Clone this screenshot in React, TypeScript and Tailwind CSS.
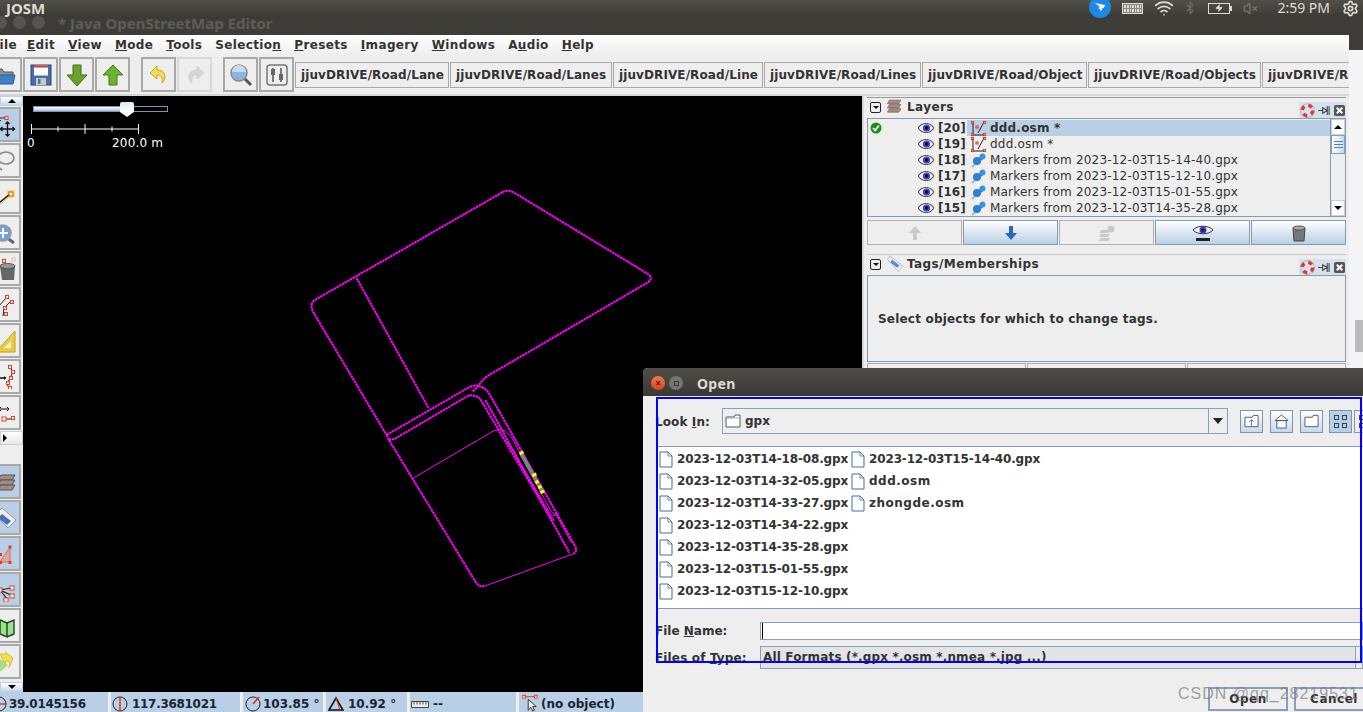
import { Bluetooth, Settings, VolumeX, Wifi, Zap } from 'lucide-react'
import type { ReactNode } from 'react'

// before / underlined mnemonic / after
const MENUS = [
  ['', 'F', 'ile'],
  ['', 'E', 'dit'],
  ['', 'V', 'iew'],
  ['', 'M', 'ode'],
  ['', 'T', 'ools'],
  ['Selectio', 'n', ''],
  ['', 'P', 'resets'],
  ['', 'I', 'magery'],
  ['', 'W', 'indows'],
  ['A', 'u', 'dio'],
  ['', 'H', 'elp'],
]

const PRESETS = [
  { label: 'jjuvDRIVE/Road/Lane', w: 'w-[154px]' },
  { label: 'jjuvDRIVE/Road/Lanes', w: 'w-[162px]' },
  { label: 'jjuvDRIVE/Road/Line', w: 'w-[150px]' },
  { label: 'jjuvDRIVE/Road/Lines', w: 'w-[157px]' },
  { label: 'jjuvDRIVE/Road/Object', w: 'w-[165px]' },
  { label: 'jjuvDRIVE/Road/Objects', w: 'w-[173px]' },
  { label: 'jjuvDRIVE/Road', w: 'w-[120px]' },
]

const LAYERS = [
  { n: 20, name: 'ddd.osm *', kind: 'data', active: true },
  { n: 19, name: 'ddd.osm *', kind: 'data' },
  { n: 18, name: 'Markers from 2023-12-03T15-14-40.gpx', kind: 'marker' },
  { n: 17, name: 'Markers from 2023-12-03T15-12-10.gpx', kind: 'marker' },
  { n: 16, name: 'Markers from 2023-12-03T15-01-55.gpx', kind: 'marker' },
  { n: 15, name: 'Markers from 2023-12-03T14-35-28.gpx', kind: 'marker' },
]

const FILES_A = [
  '2023-12-03T14-18-08.gpx',
  '2023-12-03T14-32-05.gpx',
  '2023-12-03T14-33-27.gpx',
  '2023-12-03T14-34-22.gpx',
  '2023-12-03T14-35-28.gpx',
  '2023-12-03T15-01-55.gpx',
  '2023-12-03T15-12-10.gpx',
]
const FILES_B = ['2023-12-03T15-14-40.gpx', 'ddd.osm', 'zhongde.osm']

function Icon({ children, size = 24 }: { children: ReactNode; size?: number }) {
  return (
    <svg viewBox="0 0 24 24" width={size} height={size} className="shrink-0">
      {children}
    </svg>
  )
}

function N({ x, y, s = 3 }: { x: number; y: number; s?: number }) {
  return <rect x={x - s / 2} y={y - s / 2} width={s} height={s} fill="#fff" stroke="#e0401a" strokeWidth="1" />
}

const ToolBtn = ({ children, off, active }: { children: ReactNode; off?: boolean; active?: boolean }) => (
  <div
    className={`flex h-[35px] w-[35px] shrink-0 items-center justify-center border-2 ${
      off ? 'border-[#d8d8d8]' : 'border-[#a9a9a9]'
    } ${active ? 'border-[#7f93ab] bg-[#b8cfe5]' : 'bg-[#eeeeee]'}`}
  >
    {children}
  </div>
)

const toolbarIcons = {
  open: (
    <Icon>
      <path d="M2 6h7l2 3h9v11H2z" fill="#8a8f94" stroke="#555" />
      <path d="M2 12h20l-2 9H2z" fill="#3f7fc4" stroke="#2a5a96" />
    </Icon>
  ),
  save: (
    <Icon>
      <rect x="2" y="2" width="20" height="20" fill="#4c6ea8" stroke="#2d4370" />
      <rect x="5" y="2.5" width="14" height="10" fill="#fff" />
      <rect x="5" y="2.5" width="14" height="2" fill="#d8362a" />
      <rect x="7" y="15" width="10" height="7" fill="#c9c9c9" />
      <rect x="9" y="16" width="2.5" height="5" fill="#4c6ea8" />
    </Icon>
  ),
  down: (
    <Icon>
      <path d="M8 2h8v10h6L12 23 2 12h6z" fill="#69a32e" stroke="#3f6d14" />
    </Icon>
  ),
  up: (
    <Icon>
      <path d="M8 22h8V12h6L12 2 2 12h6z" fill="#69b32e" stroke="#3f7d14" />
    </Icon>
  ),
  undo: (
    <Icon>
      <path d="M10 3 3 10l7 6v-4c4 0 6 2 5 8 5-5 4-13-5-13z" fill="#f3dc58" stroke="#c9a81e" />
    </Icon>
  ),
  redo: (
    <Icon>
      <path d="M14 3l7 7-7 6v-4c-4 0-6 2-5 8-5-5-4-13 5-13z" fill="#d6d6d6" stroke="#cfcfcf" />
    </Icon>
  ),
  zoom: (
    <Icon>
      <path d="m15 15 7 7" stroke="#555" strokeWidth="3" />
      <circle cx="10" cy="10" r="8" fill="#8db4e4" stroke="#8a8a8a" strokeWidth="1.5" />
      <path d="M3 9a7 7 0 0 1 14 0z" fill="#c9daf0" />
    </Icon>
  ),
  prefs: (
    <Icon>
      <rect x="2" y="2" width="20" height="20" rx="3" fill="#eee" stroke="#777" strokeWidth="1.5" />
      <path d="M8 5v14M16 5v14" stroke="#777" strokeWidth="2" />
      <rect x="6" y="6" width="4" height="6" fill="#666" />
      <rect x="14" y="11" width="4" height="6" fill="#666" />
    </Icon>
  ),
}

const leftIcons = [
  <Icon key="select">
    <N x={14.5} y={5} s={3} />
    <path d="M8 5h5M9 7 6 10" stroke="#222" />
    <path d="M15.5 9v14M8.5 16h14M13.5 11l2-2 2 2M13.5 21l2 2 2-2M10.5 14l-2 2 2 2M20.5 14l2 2-2 2" stroke="#111" strokeWidth="1.3" fill="none" />
  </Icon>,
  <Icon key="lasso">
    <ellipse cx="14" cy="9" rx="8" ry="6" fill="none" stroke="#888" strokeWidth="1.6" />
    <path d="M8 14c-3 1-1 5 2 7" fill="none" stroke="#888" strokeWidth="1.6" />
  </Icon>,
  <Icon key="draw">
    <rect x="15" y="5" width="8" height="8" fill="#f2e95c" />
    <path d="M2 22 18 9" stroke="#111" strokeWidth="1.5" />
    <path d="M6 21 19 10" stroke="#d8c82a" strokeWidth="1" />
    <N x={19} y={9} s={4} />
  </Icon>,
  <Icon key="zoom">
    <path d="m14 16 8 6" stroke="#666" strokeWidth="3" />
    <circle cx="11" cy="12" r="8" fill="#6f9fdc" stroke="#999" strokeWidth="1.5" />
    <path d="M11 7v10M6 12h10" stroke="#fff" strokeWidth="2" />
  </Icon>,
  <Icon key="delete">
    <N x={12} y={4} s={3} />
    <rect x="20" y="1" width="3" height="3" fill="#fff" stroke="#f0b0a0" />
    <path d="M8 9h15l-1 14H10z" fill="#666" />
    <ellipse cx="15.5" cy="9" rx="7.5" ry="2.5" fill="#999" stroke="#555" />
  </Icon>,
  <Icon key="merge">
    <path d="M6 14 15 4M18 9l-6 6-1 8" fill="none" stroke="#222" strokeWidth="1" />
    <N x={15} y={4} />
    <N x={20} y={9} />
    <N x={13} y={15} />
    <N x={14} y={21} />
  </Icon>,
  <Icon key="ruler">
    <path d="M23 2v21H4z" fill="#e8cf3a" stroke="#c0a020" />
    <path d="M19 12v7h-7z" fill="#eee" />
  </Icon>,
  <Icon key="split">
    <path d="M7 13h7" stroke="#111" strokeWidth="1.5" />
    <path d="m12 11 2 2-2 2" fill="#111" />
    <path d="m18 2 3 5-3 6-3 6 2 4" fill="none" stroke="#222" />
    <N x={18} y={2} />
    <N x={21} y={7} />
    <N x={19} y={13} />
    <N x={16} y={18} />
    <N x={18} y={23} />
  </Icon>,
  <Icon key="improve">
    <path d="M7 8h10M15 6l2 2-2 2M9 6 7 8l2 2" fill="none" stroke="#111" />
    <path d="M13 18h9" stroke="#222" />
    <N x={12} y={18} s={4} />
    <N x={21} y={17} />
  </Icon>,
]

const lowerIcons = [
  <Icon key="layers">
    <path d="M9 5h14l-3 5H6z" fill="#a58a88" stroke="#555" />
    <path d="M9 10h14l-3 5H6z" fill="#a58a88" stroke="#555" />
    <path d="M9 15h14l-3 5H6z" fill="#a58a88" stroke="#555" />
  </Icon>,
  <Icon key="tags">
    <path d="M10 2 24 14l-8 8L3 9z" fill="#eee" stroke="#999" />
    <path d="m10 8 9 7-4 4-9-7z" fill="#4473b4" />
  </Icon>,
  <Icon key="selection">
    <path d="M8 20 18 5v15z" fill="#e2a79a" stroke="#c97060" />
    <rect x="16.5" y="3.5" width="3" height="3" fill="#e0401a" />
    <rect x="7" y="11" width="3" height="3" fill="#e0401a" />
    <rect x="7" y="19" width="3" height="3" fill="#e0401a" />
    <rect x="16.5" y="19" width="3" height="3" fill="#e0401a" />
  </Icon>,
  <Icon key="relations">
    <path d="M8 12 19 10M8 12l11 5M8 12l8 10" stroke="#222" strokeWidth="1.2" />
    <N x={8} y={12} s={4} />
    <N x={20} y={10} s={4} />
    <N x={20} y={18} s={4} />
    <N x={14} y={22} s={4} />
  </Icon>,
  <Icon key="map">
    <path d="M8 6l7 3 7-3v14l-7 3-7-3z" fill="#90e880" stroke="#333" strokeWidth="1.4" />
    <path d="M15 9v14" stroke="#333" strokeWidth="1.4" />
  </Icon>,
  <Icon key="conflict">
    <path d="M8 4h6l-1-2 8 6-3 8-2 2c3-3 2-7-2-7l-1 3z" fill="#f3dc58" stroke="#dcc030" />
    <path d="m8 9 8 6-8 7-8-7z" fill="#a8dc80" />
  </Icon>,
]

function Eye() {
  return (
    <svg viewBox="0 0 16 10" width="16" height="10" className="shrink-0">
      <path d="M0 5c4-6 12-6 16 0-4 6-12 6-16 0z" fill="#eee" stroke="#555" strokeWidth="1.2" />
      <circle cx="8.5" cy="5" r="3.6" fill="#3d3dd0" />
      <circle cx="8.5" cy="5" r="1.7" fill="#111" />
    </svg>
  )
}

function LayerIcon({ kind }: { kind: string }) {
  if (kind === 'data')
    return (
      <svg viewBox="0 0 15 15" width="15" height="15" className="shrink-0">
        <path d="M2 1v13h12M13 1 7 12" fill="none" stroke="#222" strokeWidth="1" />
        <rect x="0.5" y="0.5" width="2" height="2" fill="#fff" stroke="#e0301a" />
        <rect x="12.5" y="0.5" width="2" height="2" fill="#fff" stroke="#e0301a" />
        <rect x="0.5" y="12.5" width="2" height="2" fill="#fff" stroke="#e0301a" />
        <rect x="12.5" y="12.5" width="2" height="2" fill="#fff" stroke="#e0301a" />
        <rect x="5" y="5" width="2" height="2" fill="#fff" stroke="#e0301a" />
      </svg>
    )
  return (
    <svg viewBox="0 0 15 15" width="15" height="15" className="shrink-0">
      <path d="M1 14 6 9" stroke="#9aa4b0" strokeWidth="1.4" />
      <circle cx="6" cy="8" r="4" fill="#2b7fd6" />
      <path d="M6 6 10 3l2 3-4 4z" fill="#2b7fd6" />
      <circle cx="11.500" cy="3.500" r="3" fill="#3a92e0" />
    </svg>
  )
}

function PanelHeader({ title, icon }: { title: string; icon: ReactNode }) {
  return (
    <div className="flex h-[20px] items-center pl-[3px] font-bold text-[#333333]">
      <div className="mb-[2px] flex h-[11px] w-[11px] items-center justify-center rounded-[2px] border border-[#222222]">
        <div className="h-0 w-0 border-x-[3px] border-t-[3px] border-x-transparent border-t-[#111111]" />
      </div>
      <div className="mb-[3px] ml-[3px] flex w-[21px] justify-center">{icon}</div>
      <span className="mb-[3px] ml-[2px] flex-1 tracking-[0.4px]">{title}</span>
      <div className="flex h-[16px] items-center gap-[3px] self-end bg-[#d6e1ee] pl-[1px] pr-[1px]">
        <svg viewBox="0 0 14 14" width="15" height="15">
          <circle cx="7" cy="7" r="5" fill="none" stroke="#e8352a" strokeWidth="3.4" strokeDasharray="4 3.9" />
          <circle cx="7" cy="7" r="6.4" fill="none" stroke="#999" strokeWidth="0.5" />
        </svg>
        <svg viewBox="0 0 14 12" width="13" height="11">
          <path d="M0 6h5M5 3l5 3-5 3zM10 1v10M12 1v10" fill="none" stroke="#444" strokeWidth="1.2" />
        </svg>
        <svg viewBox="0 0 12 12" width="11" height="11">
          <rect width="12" height="12" rx="2" fill="#555" />
          <path d="m3 3 6 6M9 3 3 9" stroke="#fff" strokeWidth="2.2" />
        </svg>
      </div>
    </div>
  )
}

const layerButtons = [
  { on: false, icon: <path d="M8 1 2 8h4v7h4V8h4z" fill="#c9c9c9" /> },
  { on: true, icon: <path d="M6 1h4v7h4l-6 7-6-7h4z" fill="#2f66b4" /> },
  {
    on: false,
    icon: (
      <g fill="#c9c9c9">
        <path d="M2 5h9l-2 3H0zM2 9h9l-2 3H0zM2 13h9l-2 3H0z" />
        <circle cx="12" cy="4" r="3.5" />
      </g>
    ),
  },
  {
    on: true,
    icon: (
      <g>
        <path d="M-2 5C2 0 14 0 18 5 14 10 2 10-2 5z" fill="#eee" stroke="#333" />
        <circle cx="8" cy="5" r="3.5" fill="#3d3dd0" />
        <circle cx="8" cy="5" r="1.6" fill="#111" />
        <rect x="1" y="13" width="14" height="3" fill="#222" />
      </g>
    ),
  },
  {
    on: true,
    icon: (
      <g>
        <path d="M2 3h12l-1 13H3z" fill="#777" stroke="#444" />
        <ellipse cx="8" cy="3" rx="6" ry="2" fill="#aaa" stroke="#555" />
      </g>
    ),
  },
]

function MapDrawing() {
  return (
    <svg viewBox="23 96 840 596" className="absolute inset-0 h-full w-full">
      <g fill="none" stroke="#ff00ff" strokeWidth="2" strokeDasharray="2.6 0.5" strokeLinejoin="round">
        <path d="M503 192Q508 189 514 192L649 274Q654 278 649 282L488 376Q484 379 481 383L473 392" />
        <path d="M503 192 315 300Q310 304 313 311L387 435" />
        <path d="M357 278 429 408" />
        <path d="M387 435 470 387Q476 384 482 387" />
        <path d="M482 387Q487 389 490 394L575 545Q579 551 574 554" />
        <path d="M389 440 395 439 470 395 476 396Q480 397 482 401L553 521" />
        <path d="M387 435 390 441 476 582Q480 588 486 586" />
        <path d="M486 400 570 553" />
      </g>
      <g fill="none" stroke="#ff00ff" strokeWidth="1">
        <path d="M486 586 574 554" />
        <path d="M414 478 494 431Q500 428 506 431M506 431 512 437 552 512 558 517 572 543" />
        <path d="M508 441 555 521M553 516 560 513" />
      </g>
      <path d="M522 454 543 492" stroke="#808080" strokeWidth="4" />
      <g stroke="#ffff00" strokeWidth="3">
        <path d="M520 454 524 452" />
        <path d="M533 476 537 474" />
        <path d="M536 483 539 481" />
        <path d="M539 488 542 486" />
        <path d="M541 493 545 491" />
      </g>
    </svg>
  )
}

function FileRow({ name }: { name: string }) {
  return (
    <div className="flex h-[22px] items-center">
      <svg viewBox="0 0 14 17" width="14" height="17" className="shrink-0">
        <path d="M1 1h8l4 4v11H1z" fill="#fff" stroke="#3f6ea8" strokeWidth="1" />
        <path d="M9 1v4h4" fill="none" stroke="#3f6ea8" strokeWidth="0.8" />
      </svg>
      <span className={`ml-[4px] ${name.startsWith('2023') ? 'tracking-[-0.15px]' : 'tracking-[0.5px]'}`}>{name}</span>
    </div>
  )
}

function DialogBtn({ children }: { children: ReactNode }) {
  return (
    <div className="flex h-[23px] w-[23px] shrink-0 items-center justify-center border border-[#7f93ab] bg-gradient-to-b from-white to-[#c8d8e9]">
      {children}
    </div>
  )
}

export default function App() {
  return (
    <div className="relative flex h-[712px] w-[1363px] flex-col overflow-hidden bg-[#eeeeee] font-['DejaVu_Sans',sans-serif] text-[12px] text-[#333333]">
      {/* ubuntu panel */}
      <div className="flex h-[18px] shrink-0 items-center bg-gradient-to-b from-[#504f49] to-[#3b3a36] pb-[2px] pl-[6px] text-[#dfdbd2]">
        <span className="font-['Noto_Sans',sans-serif] text-[15px] font-bold leading-none">JOSM</span>
        <div className="ml-auto flex items-center pr-[4px]">
          <div className="mb-[3px] mr-[11px] flex h-[22px] w-[22px] items-center justify-center overflow-hidden rounded-full bg-[#1e88e5]">
            <svg viewBox="0 0 16 16" width="14" height="14">
              <path d="M2 3 14 6l-2 3-2 0 1 1-3 4 1-3-3-2 2-1z" fill="#fff" />
            </svg>
          </div>
          <div className="mr-[11px] grid h-[11px] w-[21px] grid-cols-7 gap-[1px] border border-[#dfdbd2] bg-[#888888] p-[1px]">
            {Array.from({ length: 14 }).map((_, i) => (
              <div key={i} className="bg-[#dfdbd2]" />
            ))}
          </div>
          <Wifi size={20} strokeWidth={2} className="mr-[9px] text-[#dfdbd2]" />
          <Bluetooth size={14} className="mr-[11px] text-[#6e6d67]" />
          <div className="mr-[11px] flex items-center">
            <div className="flex h-[11px] w-[22px] items-center justify-center border border-[#dfdbd2]">
              <Zap size={8} fill="#dfdbd2" className="text-[#dfdbd2]" />
            </div>
            <div className="h-[5px] w-[2px] bg-[#dfdbd2]" />
          </div>
          <VolumeX size={15} className="mr-[19px] text-[#77766f]" />
          <span className="mr-[12px] font-['Noto_Sans',sans-serif] text-[14px] font-normal leading-none">2:59 PM</span>
          <Settings size={17} strokeWidth={2.4} />
        </div>
      </div>

      {/* window title */}
      <div className="flex h-[17px] shrink-0 items-center bg-[#3e3c37] pb-[7px] pl-[58px] pr-[14px]">
        <div className="absolute left-[-6px] top-[16px] flex gap-[6px]">
          {[0, 1, 2].map((i) => (
            <div key={i} className="h-[13px] w-[13px] rounded-full bg-[#56544e]" />
          ))}
        </div>
        <span className="font-['Noto_Sans',sans-serif] text-[15px] font-bold leading-none text-[#5f5d57]">* Java OpenStreetMap Editor</span>
      </div>

      <div className="flex min-h-0 flex-1">
        <div className="flex w-[1349px] shrink-0 flex-col overflow-hidden">
          {/* menu bar */}
          <div className="flex h-[20px] shrink-0 items-center gap-[13px] bg-gradient-to-b from-white to-[#eeeeee] font-bold tracking-[0.35px]">
            {MENUS.map(([pre, u, post], i) => (
              <span key={u + post} className={i === 0 ? '-ml-[9px] mr-[-3px]' : ''}>
                {pre}
                <span className="underline">{u}</span>
                {post}
              </span>
            ))}
          </div>

          {/* tool bar */}
          <div className="flex h-[41px] shrink-0 items-start border-b-2 border-[#d6d6d6] bg-[#eeeeee] pt-[2px]">
            <div className="-ml-[13px] flex gap-px">
              <ToolBtn>{toolbarIcons.open}</ToolBtn>
              <ToolBtn>{toolbarIcons.save}</ToolBtn>
              <ToolBtn>{toolbarIcons.down}</ToolBtn>
              <ToolBtn>{toolbarIcons.up}</ToolBtn>
            </div>
            <div className="ml-[11px] flex gap-px">
              <ToolBtn>{toolbarIcons.undo}</ToolBtn>
              <ToolBtn off>{toolbarIcons.redo}</ToolBtn>
            </div>
            <div className="ml-[11px] flex gap-px">
              <ToolBtn>{toolbarIcons.zoom}</ToolBtn>
              <ToolBtn>{toolbarIcons.prefs}</ToolBtn>
            </div>
            <div className="ml-px mt-[5px] flex gap-px font-bold">
              {PRESETS.map((p) => (
                <div
                  key={p.label}
                  className={`flex h-[26px] shrink-0 items-center whitespace-nowrap border border-[#a9a9a9] pl-[5px] tracking-[0.1px] ${p.w}`}
                >
                  {p.label}
                </div>
              ))}
            </div>
          </div>

          {/* main area */}
          <div className="flex min-h-0 flex-1">
            <div className="flex w-[23px] shrink-0 flex-col overflow-hidden bg-[#eeeeee]">
              <div className="flex h-[10px] shrink-0 items-center justify-center border border-[#c3d0df] bg-gradient-to-b from-white to-[#c8d8e9]">
                <div className="h-0 w-0 border-x-[4px] border-b-[4px] border-x-transparent border-b-black" />
              </div>
              <div className="mt-px flex w-[21px] flex-col items-end gap-px">
                {leftIcons.map((icon, i) => (
                  <div key={i} className="-ml-[14px]">
                    <ToolBtn active={i === 0}>{icon}</ToolBtn>
                  </div>
                ))}
              </div>
              <div className="mt-px flex h-[14px] shrink-0 items-center border border-[#d0d0d0] bg-gradient-to-b from-white to-[#e8e8e8] pl-[2px]">
                <div className="h-0 w-0 border-y-[4px] border-l-[4px] border-y-transparent border-l-black" />
              </div>
              <div className="mt-[19px] flex w-[21px] flex-col items-end gap-px">
                {lowerIcons.map((icon, i) => (
                  <div key={i} className="-ml-[14px]">
                    <ToolBtn active={i < 4}>{icon}</ToolBtn>
                  </div>
                ))}
              </div>
              <div className="mt-auto flex h-[10px] shrink-0 items-center justify-center border border-[#c3d0df] bg-gradient-to-b from-white to-[#c8d8e9]">
                <div className="h-0 w-0 border-x-[4px] border-t-[4px] border-x-transparent border-t-black" />
              </div>
            </div>

            {/* map */}
            <div className="relative min-w-0 flex-1 bg-black">
              <MapDrawing />
              <div className="absolute left-[10px] top-[10px] flex h-[6px] w-[135px] border border-[#7f93ab] bg-black">
                <div className="w-[88px] bg-gradient-to-b from-white to-[#a9c2e0]" />
              </div>
              <div className="absolute left-[97px] top-[6px] h-[10px] w-[14px] rounded-t-[2px] bg-gradient-to-b from-[#dfe8f2] to-white" />
              <div className="absolute left-[97px] top-[16px] h-0 w-0 border-x-[7px] border-t-[5px] border-x-transparent border-t-white" />
              <svg viewBox="0 0 110 12" width="110" height="12" className="absolute left-[8px] top-[27px]">
                <path d="M.5 1v10M27 3.5v5M54 1v10M81 3.5v5M107.5 1v10M0 6h108" stroke="#fff" fill="none" />
              </svg>
              <span className="absolute left-[4px] top-[38px] text-white">0</span>
              <span className="absolute left-[89px] top-[38px] whitespace-nowrap tracking-[0.2px] text-white">200.0 m</span>
            </div>

            {/* dialogs on the right */}
            <div className="flex w-[487px] shrink-0 flex-col border-l-2 border-[#d8d8d8] bg-[#eeeeee] px-[3px]">
              <div className="mt-px border-t border-[#9a9a9a]">
                <PanelHeader
                  title="Layers"
                  icon={
                    <svg viewBox="0 0 24 24" width="17" height="17">
                      <path d="M5 3h16l-3 5H2zM5 9h16l-3 5H2zM5 15h16l-3 5H2z" fill="#a58a88" stroke="#77605e" />
                    </svg>
                  }
                />
                <div className="flex h-[99px] border border-[#8a9aae]">
                  <div className="min-w-0 flex-1 overflow-hidden bg-[#eeeeee] pt-px">
                    {LAYERS.map((l) => (
                      <div key={l.n} className="flex h-[16px] items-center">
                        <div className="flex w-[50px] shrink-0 pl-[2px]">
                          {l.active && (
                            <svg viewBox="0 0 12 12" width="12" height="12">
                              <circle cx="6" cy="6" r="5.5" fill="#1f8a1f" />
                              <path d="m3 6 2.2 2.4L9 3.5" fill="none" stroke="#fff" strokeWidth="1.8" />
                            </svg>
                          )}
                        </div>
                        <Eye />
                        <span className="ml-[4px] w-[29px] shrink-0 font-bold">[{l.n}]</span>
                        <div className={`flex h-full flex-1 items-center pl-[4px] ${l.active ? 'bg-[#b8cfe5]' : ''}`}>
                          <LayerIcon kind={l.kind} />
                          <span className={`ml-[4px] whitespace-nowrap tracking-[0.2px] ${l.active ? 'font-bold' : ''}`}>{l.name}</span>
                        </div>
                      </div>
                    ))}
                  </div>
                  <div className="flex w-[15px] shrink-0 flex-col border-l border-[#8a9aae]">
                    <div className="flex h-[16px] items-center justify-center border border-[#c3d0df] bg-white">
                      <div className="h-0 w-0 border-x-[4px] border-b-[4px] border-x-transparent border-b-black" />
                    </div>
                    <div className="flex h-[19px] flex-col items-center justify-center gap-[2px] border border-[#7ea0d0] bg-gradient-to-r from-white to-[#c8d8e9]">
                      <div className="h-px w-[9px] bg-[#5a7fb5]" />
                      <div className="h-px w-[9px] bg-[#5a7fb5]" />
                      <div className="h-px w-[9px] bg-[#5a7fb5]" />
                    </div>
                    <div className="flex-1" />
                    <div className="flex h-[16px] items-center justify-center border border-[#c3d0df] bg-white">
                      <div className="h-0 w-0 border-x-[4px] border-t-[4px] border-x-transparent border-t-black" />
                    </div>
                  </div>
                </div>
                <div className="mt-[3px] grid h-[25px] grid-cols-5 gap-px">
                  {layerButtons.map((b, i) => (
                    <div
                      key={i}
                      className={`flex items-center justify-center border border-[#8a9aae] ${
                        b.on ? 'bg-gradient-to-b from-white to-[#b8cfe5]' : 'bg-[#eeeeee] border-[#b0b0b0]'
                      }`}
                    >
                      <svg viewBox="0 0 16 16" width="16" height="16" className="overflow-visible">
                        {b.icon}
                      </svg>
                    </div>
                  ))}
                </div>
              </div>
              <div className="mt-[9px] border-t border-[#c8c8c8]">
                <PanelHeader
                  title="Tags/Memberships"
                  icon={
                    <svg viewBox="0 0 24 24" width="18" height="18">
                      <path d="M5 1 23 15l-7 7L2 6z" fill="#e8edf3" stroke="#a8b0b8" />
                      <path d="m8 6 10 8-3 3-9-7z" fill="#5b8ac8" />
                    </svg>
                  }
                />
                <div className="flex h-[87px] items-center border border-[#8a9aae] pl-[10px] font-bold tracking-[0.2px]">
                  Select objects for which to change tags.
                </div>
                <div className="mt-px grid h-[12px] grid-cols-3 gap-px">
                  <div className="border border-[#b0b0b0]" />
                  <div className="border border-[#b0b0b0]" />
                  <div className="border border-[#b0b0b0]" />
                </div>
              </div>
            </div>
          </div>
        </div>

        {/* window behind, at the right edge */}
        <div className="flex min-w-0 flex-1 flex-col bg-[#f5f5f5]">
          <div className="h-[15px] shrink-0 bg-[#3e3c37]" />
          <div className="ml-[6px] mt-[270px] h-[32px] bg-[#bcbcbc]" />
        </div>
      </div>

      {/* status bar */}
      <div className="flex h-[20px] shrink-0 items-center gap-[3px] bg-[#eeeeee] font-bold text-[#1a2433]">
        <div className="flex h-full w-[108px] shrink-0 items-center gap-[2px] bg-[#b8cfe5] pt-[3px] tracking-[-0.3px]">
          <svg viewBox="0 0 16 16" width="16" height="16" className="-ml-[9px] shrink-0">
            <circle cx="8" cy="8" r="7" fill="none" stroke="#222" />
            <path d="M1 8h14" stroke="#e0301a" strokeWidth="1.4" />
          </svg>
          39.0145156
        </div>
        <div className="flex h-full w-[129px] shrink-0 items-center gap-[4px] bg-[#b8cfe5] pl-[1px] pt-[3px] tracking-[-0.3px]">
          <svg viewBox="0 0 16 16" width="16" height="16" className="shrink-0">
            <circle cx="8" cy="8" r="7" fill="none" stroke="#222" />
            <path d="M8 1v14" stroke="#e0301a" strokeWidth="1.4" />
          </svg>
          117.3681021
        </div>
        <div className="flex h-full w-[80px] shrink-0 items-center gap-[2px] bg-[#b8cfe5] pl-[2px] pt-[3px]">
          <svg viewBox="0 0 16 16" width="16" height="16" className="shrink-0">
            <circle cx="8" cy="8" r="7" fill="none" stroke="#222" />
            <path d="M8 8l6-7" stroke="#e0301a" strokeWidth="1.6" />
          </svg>
          103.85 °
        </div>
        <div className="flex h-full w-[81px] shrink-0 items-center gap-[4px] bg-[#b8cfe5] pl-[2px] pt-[3px]">
          <svg viewBox="0 0 16 16" width="16" height="16" className="shrink-0">
            <path d="M1 14 8 2l7 12z" fill="none" stroke="#111" strokeWidth="1.6" />
            <path d="M8 2l4 12" stroke="#e0301a" />
          </svg>
          10.92 °
        </div>
        <div className="flex h-full w-[106px] shrink-0 items-center gap-[4px] bg-[#b8cfe5] pl-[1px] pt-[3px]">
          <svg viewBox="0 0 18 8" width="18" height="8" className="shrink-0">
            <path d="M.5 1.5h17v6H.5zM3 1.5v3M6 1.5v3M9 1.500v3M12 1.500v3M15 1.500v3" fill="#eee" stroke="#222" strokeWidth="0.8" />
          </svg>
          --
        </div>
        <div className="flex h-full flex-1 items-center gap-[2px] bg-[#b8cfe5] pl-[2px] pt-[2px]">
          <svg viewBox="0 0 18 20" width="18" height="18" className="shrink-0">
            <path d="M3 3h12" stroke="#e0301a" />
            <rect x="1" y="1.5" width="3" height="3" fill="#fff" stroke="#e0301a" />
            <rect x="14" y="1.5" width="3" height="3" fill="#fff" stroke="#e0301a" />
            <path d="M7 6v12l3-3 2 4 2-1-2-4h4z" fill="#eee" stroke="#111" strokeWidth="0.9" />
          </svg>
          <span className="pt-px">(no object)</span>
        </div>
      </div>

      {/* file chooser over the main window */}
      <div className="absolute bottom-0 left-[643px] top-[368px] flex w-[720px] flex-col overflow-hidden rounded-tl-[5px] bg-[#eeeeee] font-bold">
        <div className="flex h-[28px] shrink-0 items-center bg-gradient-to-b from-[#4f4d46] to-[#3b3934] pl-[8px] pt-[2px] font-['Noto_Sans',sans-serif] text-[14px] text-[#dfdbd2]">
          <div className="flex h-[14px] w-[14px] items-center justify-center rounded-full bg-gradient-to-b from-[#f0764a] to-[#d9431e] text-[10px] leading-none text-[#5a2010]">
            ×
          </div>
          <div className="ml-[4px] flex h-[14px] w-[14px] items-center justify-center rounded-full bg-[#77756f]">
            <div className="h-[5px] w-[5px] border border-[#3b3934]" />
          </div>
          <span className="ml-[14px] tracking-[0.3px]">Open</span>
        </div>

        <div className="flex flex-1 flex-col pl-[13px]">
          <div className="mt-[12px] flex h-[26px] shrink-0 items-center">
            <span className="-ml-px mt-[2px] w-[67px] shrink-0 tracking-[0.1px]">
              Look <span className="underline">I</span>n:
            </span>
            <div className="flex h-full w-[506px] shrink-0 border border-[#8aa0ba] bg-[#eeeeee]">
              <div className="flex flex-1 items-center pl-[2px]">
                <svg viewBox="0 0 16 14" width="16" height="14" className="shrink-0">
                  <path d="M1 3h8l1-2h5v12H1z" fill="#fff" stroke="#4a5a70" />
                  <path d="M1 4h14" stroke="#9aaabd" />
                </svg>
                <span className="ml-[4px]">gpx</span>
              </div>
              <div className="flex w-[19px] items-center justify-center border-l border-[#8aa0ba]">
                <div className="h-0 w-0 border-x-[5px] border-t-[6px] border-x-transparent border-t-[#222222]" />
              </div>
            </div>
            <div className="ml-[12px] flex gap-[7px]">
              <DialogBtn>
                <svg viewBox="0 0 16 14" width="15" height="14">
                  <path d="M1 3h8l1-2h5v12H1z" fill="#fff" stroke="#4a5a70" />
                  <path d="M8 12V6M5.500 8 8 5.500 10.500 8" stroke="#3f6ea8" fill="none" />
                </svg>
              </DialogBtn>
              <DialogBtn>
                <svg viewBox="0 0 16 16" width="15" height="15">
                  <path d="M1 7 8 1l7 6zM3 7h10v8H3z" fill="#fff" stroke="#4a5a70" />
                </svg>
              </DialogBtn>
              <DialogBtn>
                <svg viewBox="0 0 16 14" width="15" height="14">
                  <path d="M1 3h8l1-2h5v12H1z" fill="#fff" stroke="#4a5a70" />
                </svg>
              </DialogBtn>
              <div className="-ml-[1px] flex gap-[2px]">
                <div className="grid h-[23px] w-[23px] grid-cols-2 gap-[3px] border border-[#7f93ab] bg-[#b8cfe5] p-[4px]">
                  {[0, 1, 2, 3].map((i) => (
                    <div key={i} className="border border-[#33415a]" />
                  ))}
                </div>
                <div className="grid h-[23px] w-[23px] grid-cols-2 gap-[3px] border border-[#7f93ab] bg-[#eeeeee] p-[4px]">
                  {[0, 1, 2, 3].map((i) => (
                    <div key={i} className="border border-[#33415a]" />
                  ))}
                </div>
              </div>
            </div>
          </div>

          <div className="mt-[12px] flex h-[163px] shrink-0 gap-[3px] border-y border-[#8a9aae] bg-white pl-[3px] pt-[1px]">
            <div className="flex flex-col">
              {FILES_A.map((f) => (
                <FileRow key={f} name={f} />
              ))}
            </div>
            <div className="flex flex-col">
              {FILES_B.map((f) => (
                <FileRow key={f} name={f} />
              ))}
            </div>
          </div>

          <div className="mt-[13px] flex h-[18px] shrink-0 items-center">
            <span className="-ml-px w-[105px] shrink-0">
              File <span className="underline">N</span>ame:
            </span>
            <div className="h-full flex-1 border border-[#8aa0ba] bg-white pl-[1px]">
              <div className="h-full w-px bg-black" />
            </div>
          </div>
          <div className="mt-[6px] flex h-[23px] shrink-0 items-center">
            <span className="-ml-px w-[105px] shrink-0 whitespace-nowrap tracking-[0.15px]">
              Files of <span className="underline">T</span>ype:
            </span>
            <div className="flex h-full flex-1 border border-[#8aa0ba] bg-[#e4e4e4]">
              <span className="flex-1 whitespace-nowrap pl-[2px] pt-px tracking-[0.15px]">All Formats (*.gpx *.osm *.nmea *.jpg ...)</span>
              <div className="w-[7px] border-l border-[#8aa0ba] bg-[#eeeeee]" />
            </div>
          </div>

          <div className="ml-[552px] mt-[18px] flex shrink-0 gap-[6px] tracking-[0.5px]">
            <div className="flex h-[24px] w-[80px] shrink-0 items-center justify-center border-2 border-[#8aa0ba] bg-[#eeeeee]">Open</div>
            <div className="flex h-[24px] w-[80px] shrink-0 items-center justify-center border-2 border-[#8aa0ba] bg-[#eeeeee]">Cancel</div>
          </div>
        </div>

        <div className="pointer-events-none absolute left-[13px] right-[1px] top-[29px] h-[266px] border-2 border-[#0000ff]" />
      </div>

      <span className="pointer-events-none absolute left-[1178px] top-[682px] font-['Liberation_Sans',sans-serif] text-[16px] tracking-[1px] text-[#7a7a7a]/70">
        CSDN @qq_28219531
      </span>
    </div>
  )
}
